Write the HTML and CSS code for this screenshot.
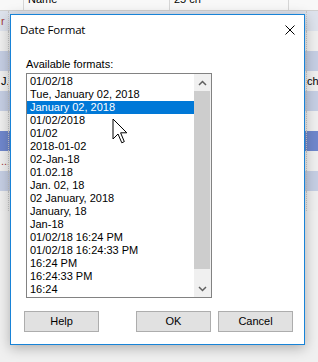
FILE: index.html
```html
<!DOCTYPE html>
<html>
<head>
<meta charset="utf-8">
<link rel="stylesheet" href="styles.css">
</head>
<body>
<div class="sheet">
  <div class="row row-top">
    <div class="c c0"></div>
    <div class="c c1">Name</div>
    <div class="c c2">25 ch</div>
    <div class="c c3"></div>
  </div>
  <div class="row alt0"><span class="lt red">r</span><span class="rt"></span></div>
  <div class="row light"><span class="lt"></span><span class="rt"></span></div>
  <div class="row blue"><span class="lt"></span><span class="rt"></span></div>
  <div class="row light"><span class="lt">J.</span><span class="rt">ch</span></div>
  <div class="row blue"><span class="lt"></span><span class="rt"></span></div>
  <div class="row light"><span class="lt"></span><span class="rt"></span></div>
  <div class="row sel"><span class="lt"></span><span class="rt"></span></div>
  <div class="row light"><span class="lt red">...</span><span class="rt"></span></div>
  <div class="row blue"><span class="lt"></span><span class="rt"></span></div>
  <div class="row light"><span class="lt"></span><span class="rt"></span></div>
</div>

<div class="dialog">
  <div class="titlebar">
    <div class="title">Date Format</div>
    <div class="close">
      <svg width="10" height="10" viewBox="0 0 10 10"><path d="M0.5 0.5 L9.5 9.5 M9.5 0.5 L0.5 9.5" stroke="#000" stroke-width="1" fill="none"/></svg>
    </div>
  </div>
  <div class="label">Available formats:</div>
  <div class="listbox">
    <div class="items">
      <div class="item">01/02/18</div>
      <div class="item">Tue, January 02, 2018</div>
      <div class="item selected">January 02, 2018</div>
      <div class="item">01/02/2018</div>
      <div class="item">01/02</div>
      <div class="item">2018-01-02</div>
      <div class="item">02-Jan-18</div>
      <div class="item">01.02.18</div>
      <div class="item">Jan. 02, 18</div>
      <div class="item">02 January, 2018</div>
      <div class="item">January, 18</div>
      <div class="item">Jan-18</div>
      <div class="item">01/02/18 16:24 PM</div>
      <div class="item">01/02/18 16:24:33 PM</div>
      <div class="item">16:24 PM</div>
      <div class="item">16:24:33 PM</div>
      <div class="item">16:24</div>
    </div>
    <div class="scrollbar">
      <div class="sbtn">
        <svg width="9" height="6" viewBox="0 0 9 6"><path d="M1 5 L4.5 1.5 L8 5" stroke="#606060" stroke-width="1.5" fill="none"/></svg>
      </div>
      <div class="thumb"></div>
      <div class="track"></div>
      <div class="sbtn">
        <svg width="9" height="6" viewBox="0 0 9 6"><path d="M1 1 L4.5 4.5 L8 1" stroke="#606060" stroke-width="1.5" fill="none"/></svg>
      </div>
    </div>
  </div>
  <div class="buttons">
    <div class="btn">Help</div>
    <div class="spacer"></div>
    <div class="btn">OK</div>
    <div class="btn">Cancel</div>
  </div>
</div>

<svg class="cursor" width="16" height="26" viewBox="0 0 16 26">
  <path d="M1 1 L1 21 L6 16 L9.8 24.8 L12.3 23.6 L8.6 14.8 L14.8 14.8 Z" fill="#fff" stroke="#000" stroke-width="1" stroke-linejoin="miter"/>
</svg>
</body>
</html>
```

FILE: styles.css
```css
html, body {
  margin: 0;
  padding: 0;
}
body {
  width: 318px;
  height: 362px;
  overflow: hidden;
  position: relative;
  background: #f0f0f0;
  font-family: "Liberation Sans", Arial, sans-serif;
  font-size: 11px;
  color: #000;
}
.sheet {
  display: flex;
  flex-direction: column;
}
.row {
  height: 20px;
  display: flex;
  justify-content: space-between;
  align-items: center;
  line-height: 13px;
}
.row-top {
  margin-top: -10px;
  background: #f8f8f8;
  border-bottom: 1px solid #cfcfcf;
  align-items: stretch;
  justify-content: flex-start;
  line-height: 18px;
}
.row-top .c {
  border-right: 1px solid #d6d6d6;
  padding-left: 4px;
  box-sizing: border-box;
  white-space: nowrap;
  overflow: hidden;
}
.c0 { width: 24px; }
.c1 { width: 146px; }
.c2 { width: 119px; }
.c3 { flex: 1; border-right: none !important; }
.lt {
  width: 9px;
  padding-left: 1px;
  box-sizing: border-box;
  overflow: hidden;
  white-space: nowrap;
  height: 20px;
  line-height: 20px;
  border-right: 1px dotted #c8c8c8;
}
.rt {
  width: 11px;
  height: 20px;
  line-height: 20px;
  overflow: hidden;
  white-space: nowrap;
  border-left: 1px dotted #c8c8c8;
}
.red { color: #a23a3a; }
.alt0 { background: #dde2ec; }
.light { background: #efefef; }
.blue { background: #c5cee3; }
.sel { background: #6f87cc; }

.dialog {
  position: absolute;
  left: 10px;
  top: 14px;
  width: 293px;
  height: 329px;
  border: 1px solid #1883d7;
  background: #fff;
  box-shadow: 0 3px 12px rgba(0, 0, 0, 0.28);
  display: flex;
  flex-direction: column;
}
.titlebar {
  height: 30px;
  display: flex;
  align-items: center;
  padding-left: 9px;
}
.title {
  flex: 1;
  font-family: "Open Sans", "Noto Sans", sans-serif;
  font-size: 11.5px;
  letter-spacing: -0.15px;
  line-height: 16px;
  color: #000;
}
.close {
  width: 28px;
  height: 30px;
  display: flex;
  align-items: center;
  justify-content: center;
}
.close svg { display: block; }
.label {
  margin-top: 13px;
  margin-left: 15px;
  height: 13px;
  line-height: 13px;
  white-space: nowrap;
}
.listbox {
  margin-top: 2px;
  margin-left: 15px;
  width: 184px;
  height: 223px;
  border: 1px solid #828282;
  display: flex;
}
.items {
  flex: 1;
  padding-top: 1px;
  overflow: hidden;
}
.item {
  height: 13px;
  line-height: 13px;
  padding-left: 3px;
  white-space: nowrap;
}
.item.selected {
  background: #0078d7;
  color: #fff;
}
.scrollbar {
  width: 17px;
  background: #f0f0f0;
  display: flex;
  flex-direction: column;
}
.sbtn {
  height: 17px;
  display: flex;
  align-items: center;
  justify-content: center;
}
.sbtn svg { display: block; }
.thumb {
  height: 178px;
  background: #cdcdcd;
  margin-right: 1px;
}
.track {
  flex: 1;
}
.buttons {
  margin-top: 13px;
  display: flex;
  padding-left: 13px;
  padding-right: 11px;
  gap: 7px;
}
.spacer { flex: 1; }
.btn {
  width: 75px;
  height: 21px;
  box-sizing: border-box;
  border: 1px solid #adadad;
  background: #e1e1e1;
  display: flex;
  align-items: center;
  justify-content: center;
  line-height: 13px;
}
.cursor {
  position: absolute;
  left: 112px;
  top: 118px;
}
```
